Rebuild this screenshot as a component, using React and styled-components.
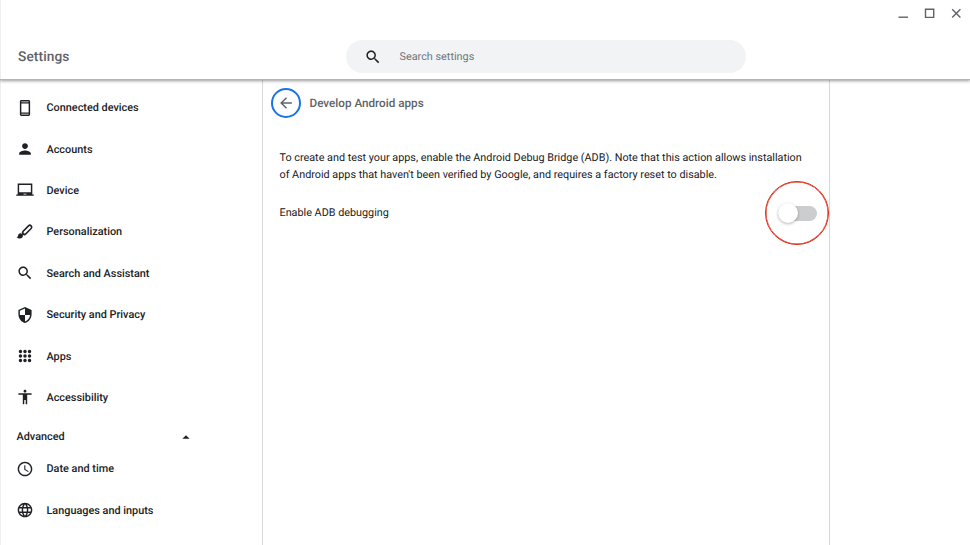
import React from 'react'
import styled, { createGlobalStyle } from 'styled-components'

const SearchPath = 'M15.5 14h-.79l-.28-.27C15.41 12.59 16 11.11 16 9.5 16 5.91 13.09 3 9.5 3S3 5.91 3 9.5 5.91 16 9.5 16c1.61 0 3.09-.59 4.23-1.57l.27.28v.79l5 4.99L20.49 19l-4.99-5zm-6 0C7.01 14 5 11.99 5 9.5S7.01 5 9.5 5 14 7.01 14 9.5 11.99 14 9.5 14z'

const mainLinks = [
  {
    text: 'Connected devices',
    icon: 'M17 1H7c-1.1 0-2 .9-2 2v18c0 1.1.9 2 2 2h10c1.1 0 2-.9 2-2V3c0-1.1-.9-2-2-2zm0 20H7v-1h10v1zm0-3H7V6h10v12zm0-14H7V3h10v1z',
  },
  {
    text: 'Accounts',
    icon: 'M12 12c2.21 0 4-1.79 4-4s-1.79-4-4-4-4 1.79-4 4 1.79 4 4 4zm0 2c-2.67 0-8 1.34-8 4v2h16v-2c0-2.66-5.33-4-8-4z',
  },
  {
    text: 'Device',
    icon: 'M22 18V3H2v15H0v2h24v-2h-2zm-8 0h-4v-1h4v1zm6-3H4V5h16v10z',
  },
  {
    text: 'Personalization',
    icon: 'M8.65 10.25L16.05 2.85A3.6 3.6 0 0 1 21.15 7.95L13.75 15.35A3.6 3.6 0 0 1 8.65 10.25zM10.3 11.6A1.5 1.5 0 0 0 12.4 13.7L19.66 6.46A1.5 1.5 0 0 0 17.54 4.34zM5.8 13.8c-1.9 0-3.2 1.4-3.2 3.1 0 1.2-.9 2-1.9 2.2 1 1.1 2.7 1.7 4.4 1.7 2.4 0 4.1-1.7 4.1-3.8 0-1.8-1.5-3.2-3.4-3.2z',
  },
  { text: 'Search and Assistant', icon: SearchPath },
  {
    text: 'Security and Privacy',
    icon: 'M12 1L3 5v6c0 5.55 3.84 10.74 9 12 5.16-1.26 9-6.45 9-12V5l-9-4zm0 10.99h7c-.53 4.12-3.28 7.79-7 8.94V12H5V6.3l7-3.11v8.8z',
  },
  {
    text: 'Apps',
    icon: [5.8, 12, 18.2]
      .flatMap((y) => [5.8, 12, 18.2].map((x) => `M${x - 2.4} ${y}a2.4 2.4 0 1 0 4.8 0a2.4 2.4 0 1 0-4.8 0z`))
      .join(''),
  },
  {
    text: 'Accessibility',
    icon: 'M12 2c1.1 0 2 .9 2 2s-.9 2-2 2-2-.9-2-2 .9-2 2-2zm9 7h-6v13h-2v-6h-2v6H9V9H3V7h18v2z',
  },
]

const advancedLinks = [
  {
    text: 'Date and time',
    icon: 'M11.99 2C6.47 2 2 6.48 2 12s4.47 10 9.99 10C17.52 22 22 17.52 22 12S17.52 2 11.99 2zM12 20c-4.42 0-8-3.58-8-8s3.58-8 8-8 8 3.58 8 8-3.58 8-8 8zm.5-13H11v6l5.25 3.15.75-1.23-4.5-2.67z',
  },
  {
    text: 'Languages and inputs',
    icon: 'M11.99 2C6.47 2 2 6.48 2 12s4.47 10 9.99 10C17.52 22 22 17.52 22 12S17.52 2 11.99 2zm6.93 6h-2.95c-.32-1.25-.78-2.45-1.38-3.56 1.84.63 3.37 1.91 4.33 3.56zM12 4.04c.83 1.2 1.48 2.53 1.91 3.96h-3.82c.43-1.43 1.08-2.76 1.91-3.96zM4.26 14C4.1 13.36 4 12.69 4 12s.1-1.36.26-2h3.38c-.08.66-.14 1.32-.14 2s.06 1.34.14 2H4.26zm.82 2h2.95c.32 1.25.78 2.45 1.38 3.56-1.84-.63-3.37-1.9-4.33-3.56zm2.95-8H5.08c.96-1.66 2.49-2.93 4.33-3.56C8.81 5.55 8.35 6.75 8.03 8zM12 19.96c-.83-1.2-1.48-2.53-1.91-3.96h3.82c-.43 1.43-1.08 2.76-1.91 3.96zM14.34 14H9.66c-.09-.66-.16-1.32-.16-2s.07-1.35.16-2h4.68c.09.65.16 1.32.16 2s-.07 1.34-.16 2zm.25 5.56c.6-1.11 1.06-2.31 1.38-3.56h2.95c-.96 1.65-2.49 2.93-4.33 3.56zM16.36 14c.08-.66.14-1.32.14-2s-.06-1.34-.14-2h3.38c.16.64.26 1.31.26 2s-.1 1.36-.26 2h-3.38z',
  },
]

const Icon = ({ d }) => (
  <svg width='18' height='18' viewBox='-0.3 -0.3 24.6 24.6' fill='currentColor'>
    <path d={d} />
  </svg>
)

const NavLinks = ({ links }) =>
  links.map((link) => (
    <NavItem key={link.text}>
      <Icon d={link.icon} />
      <span>{link.text}</span>
    </NavItem>
  ))

const App = () => {
  return (
    <Page>
      <GlobalStyle />
      <Header>
        <WindowControls>
          <svg width='66' height='14' viewBox='0 0 66 14' fill='none' stroke='#5f6368' strokeWidth='1.4'>
            <path d='M1.5 10.2h9.5' />
            <path d='M28.5 2.2h8.2v8.2h-8.2z' />
            <path d='M55.2 2.2l8.2 8.2M63.4 2.2l-8.2 8.2' />
          </svg>
        </WindowControls>
        <Toolbar>
          <Title>Settings</Title>
          <SearchBar>
            <Icon d={SearchPath} />
            <span>Search settings</span>
          </SearchBar>
        </Toolbar>
      </Header>
      <Body>
        <Sidebar>
          <NavLinks links={mainLinks} />
          <AdvancedToggle>
            Advanced
            <Icon d='M7 14.5l5-5 5 5z' />
          </AdvancedToggle>
          <NavLinks links={advancedLinks} />
        </Sidebar>
        <Content>
          <SubHeader>
            <BackButton aria-label='Back'>
              <Icon d='M20 11H7.83l5.59-5.59L12 4l-8 8 8 8 1.41-1.41L7.83 13H20v-2z' />
            </BackButton>
            <h2>Develop Android apps</h2>
          </SubHeader>
          <Description>
            To create and test your apps, enable the Android Debug Bridge (ADB). Note that this action allows installation
            <br />
            of Android apps that haven't been verified by Google, and requires a factory reset to disable.
          </Description>
          <SettingRow>
            <span>Enable ADB debugging</span>
            <Highlight>
              <Toggle role='switch' aria-checked='false'>
                <Knob />
              </Toggle>
            </Highlight>
          </SettingRow>
        </Content>
      </Body>
    </Page>
  )
}

const GlobalStyle = createGlobalStyle`
  * {
    box-sizing: border-box;
  }
  body {
    margin: 0;
    background: #fff;
    font-family: Roboto, sans-serif;
    color: #202124;
    overflow: hidden;
    text-rendering: geometricPrecision;
  }
  svg {
    display: block;
    flex-shrink: 0;
  }
`

const Page = styled.div`
  width: 970px;
  height: 545px;
  display: flex;
  flex-direction: column;
  overflow: hidden;
  box-shadow: inset 1px 0 #eee;
`

const Header = styled.header`
  position: relative;
  z-index: 1;
  height: 80px;
  flex-shrink: 0;
  border-bottom: 1px solid #b4b4b4;
  box-shadow: 0 1px 3px rgba(0, 0, 0, 0.4);
`

const WindowControls = styled.div`
  height: 40px;
  display: flex;
  justify-content: flex-end;
  padding: 7px 7px 0 0;
`

const Toolbar = styled.div`
  height: 33px;
  display: flex;
  align-items: center;
`

const Title = styled.h1`
  width: 346px;
  margin: 0;
  padding-left: 18px;
  font-size: 13.7px;
  font-weight: 500;
  letter-spacing: 0.1px;
  color: #5f6368;
`

const SearchBar = styled.div`
  width: 400px;
  height: 33px;
  display: flex;
  align-items: center;
  gap: 17.5px;
  padding-left: 18px;
  border-radius: 17px;
  background: #f1f3f4;
  font-size: 10.85px;

  span {
    margin-top: -1px;
    color: #70757a;
  }
`

const Body = styled.div`
  flex: 1;
  min-height: 0;
  display: flex;
`

const Sidebar = styled.nav`
  width: 262px;
  flex-shrink: 0;
  padding-top: 7px;
  font-size: 10.87px;
  font-weight: 500;
`

const NavItem = styled.div`
  height: 41.4px;
  display: flex;
  align-items: center;
  gap: 12.5px;
  padding-left: 16px;
`

const AdvancedToggle = styled.div`
  height: 29.8px;
  display: flex;
  align-items: center;
  justify-content: space-between;
  padding: 7px 67px 0 16.5px;
`

const Content = styled.main`
  width: 568px;
  border-left: 1px solid #d8d8d8;
  border-right: 1px solid #d8d8d8;
  font-size: 10.82px;
`

const SubHeader = styled.div`
  display: flex;
  align-items: center;
  gap: 8.5px;
  padding: 8px 0 0 8px;

  h2 {
    margin: 0;
    font-size: 11.7px;
    font-weight: 500;
    color: #5f6368;
  }
`

const BackButton = styled.button`
  width: 30px;
  height: 30px;
  display: flex;
  align-items: center;
  justify-content: center;
  padding: 0;
  border: 2px solid #1a73e8;
  border-radius: 50%;
  background: none;
  color: #5f6368;
`

const Description = styled.p`
  margin: 31px 0 0 16.5px;
  line-height: 17px;
  white-space: nowrap;
`

const SettingRow = styled.div`
  height: 64px;
  display: flex;
  align-items: center;
  justify-content: space-between;
  margin-top: -2px;
  padding-left: 16.5px;

  > span {
    margin-top: -1px;
  }
`

const Highlight = styled.div`
  width: 64px;
  height: 64px;
  display: flex;
  align-items: center;
  justify-content: center;
  border: 1px solid #e2240f;
  box-shadow: inset 0 0 0 0.5px #e2240f;
  border-radius: 50%;
`

const Toggle = styled.div`
  width: 39px;
  height: 15px;
  display: flex;
  align-items: center;
  border-radius: 8px;
  background: #cbcdcf;
`

const Knob = styled.div`
  width: 20px;
  height: 20px;
  border-radius: 50%;
  background: #fff;
  box-shadow: 0 1px 3px rgba(0, 0, 0, 0.3);
`

export default App
